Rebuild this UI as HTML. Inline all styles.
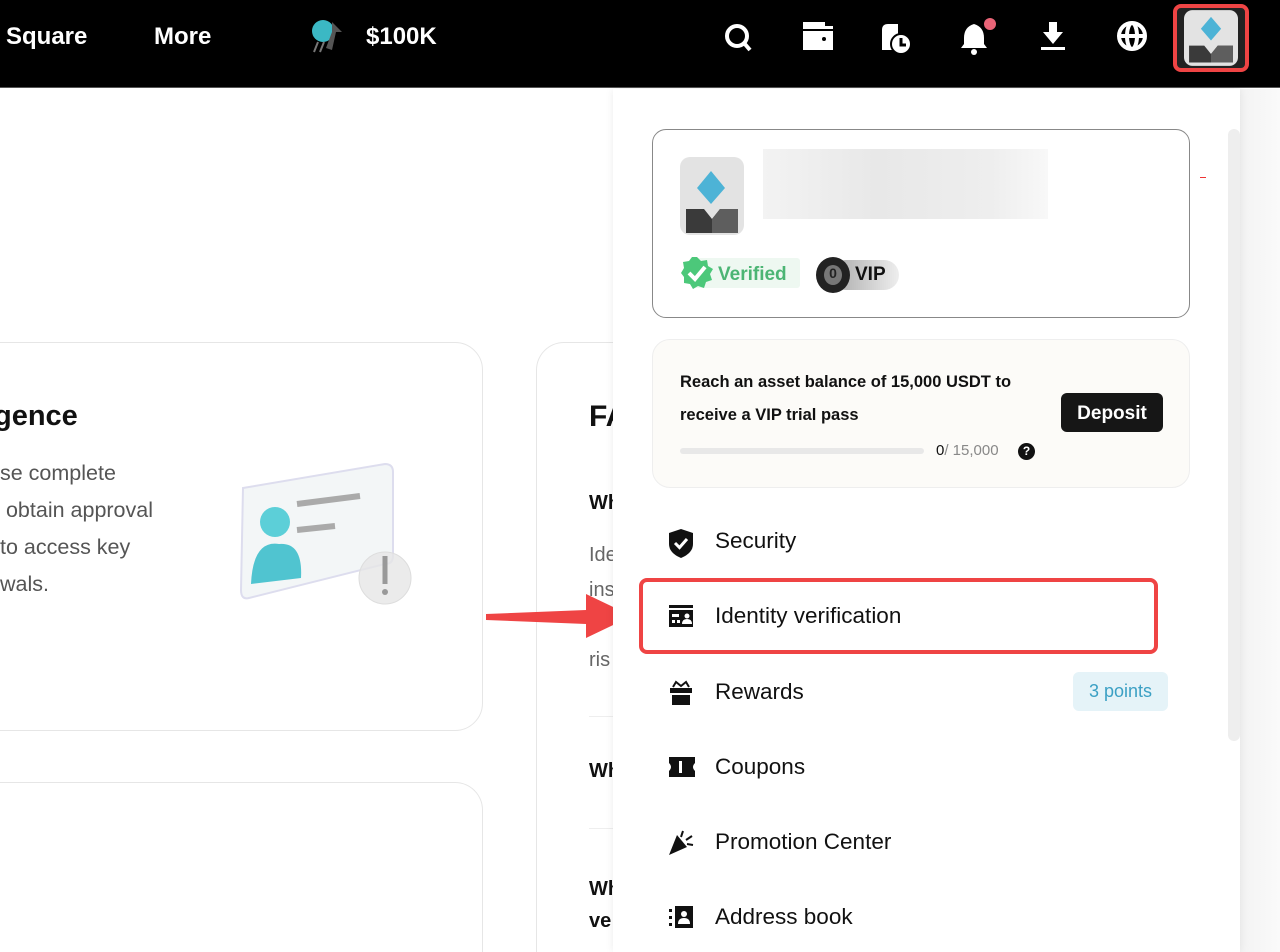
<!DOCTYPE html>
<html style="width:1280px;height:952px;overflow:hidden"><head><meta charset="utf-8"><style>
*{box-sizing:border-box;margin:0;padding:0}
body{width:1280px;height:952px;overflow:hidden;background:#fff;font-family:"Liberation Sans",Arial,sans-serif;position:relative;color:#111}
#wrap{position:absolute;left:0;top:0;width:1280px;height:952px;overflow:hidden}
.hdr{position:absolute;left:0;top:0;width:1280px;height:88px;background:#000;border-bottom:1px solid #555}
.nav{position:absolute;top:23px;color:#fff;font-weight:bold;font-size:24px}
.ic{position:absolute;top:18px}
.card{position:absolute;border:1px solid #e6e6e6;border-radius:28px;background:#fff}
.open{border-bottom:none;border-bottom-left-radius:0;border-bottom-right-radius:0}
.dd{position:absolute;left:613px;top:89px;width:627px;height:863px;background:#fff;box-shadow:0 0 8px rgba(0,0,0,.08);overflow:hidden}
.item{position:absolute;left:54px;font-size:22.5px;color:#111}
.item svg{position:absolute;left:0;top:0}
.item span{position:absolute;left:48px;top:0;white-space:nowrap}
</style></head><body><div id="wrap">
<div class="hdr"></div>
<div class="nav" style="left:6px">Square</div>
<div class="nav" style="left:154px">More</div>
<svg style="position:absolute;left:310px;top:18px" width="40" height="36"><circle cx="13" cy="13" r="11" fill="#3bb8c4"/><path d="M22 4 L32 14 L26 14 L22 32 L16 30 L22 14 Z" fill="#555"/><path d="M8 24 L4 34 M14 24 L10 34" stroke="#777" stroke-width="2"/></svg>
<div class="nav" style="left:366px">$100K</div>
<svg class="ic" style="left:722px" width="32" height="40" viewBox="0 0 32 40"><circle cx="15" cy="18" r="10" fill="none" stroke="#fff" stroke-width="4"/><path d="M22 25 L28 32" stroke="#fff" stroke-width="4"/></svg>
<svg class="ic" style="left:801px" width="34" height="40" viewBox="0 0 34 40"><rect x="2" y="8" width="30" height="24" fill="#fff"/><rect x="2" y="4" width="22" height="4" fill="#fff"/><rect x="2" y="11" width="30" height="2" fill="#000"/><circle cx="23" cy="21" r="2" fill="#000"/></svg>
<svg class="ic" style="left:878px" width="36" height="40" viewBox="0 0 36 40"><path d="M4 12 Q4 6 10 6 L20 6 L20 32 L4 32 Z" fill="#fff"/><circle cx="23" cy="26" r="10" fill="#fff" stroke="#000" stroke-width="2"/><path d="M23 20 V27 H28" stroke="#000" stroke-width="3" fill="none"/></svg>
<svg class="ic" style="left:958px" width="40" height="40" viewBox="0 0 40 40"><path d="M16 4 L16 6 Q6 9 6 20 L6 26 L3 30 L29 30 L26 26 L26 20 Q26 9 16 6Z" fill="#fff"/><circle cx="16" cy="34" r="3" fill="#fff"/><circle cx="32" cy="6" r="6" fill="#e96477"/></svg>
<svg class="ic" style="left:1038px" width="30" height="40" viewBox="0 0 30 40"><path d="M11 4 H19 V14 H25 L15 26 L5 14 H11Z" fill="#fff"/><rect x="3" y="29" width="24" height="3" fill="#fff"/></svg>
<svg class="ic" style="left:1114px" width="36" height="40" viewBox="0 0 36 40"><circle cx="18" cy="18" r="13" fill="none" stroke="#fff" stroke-width="4"/><ellipse cx="18" cy="18" rx="5" ry="13" fill="none" stroke="#fff" stroke-width="4"/><path d="M5 18 H31" stroke="#fff" stroke-width="4"/></svg>
<div style="position:absolute;left:1173px;top:4px;width:76px;height:68px;border:4px solid #ef4444;border-radius:8px;background:#222"></div>
<svg style="position:absolute;left:1184px;top:10px" width="54" height="56" viewBox="0 0 64 66"><rect width="64" height="66" rx="10" fill="#e3e3e3"/><path d="M32 8 L44 22 L32 36 L20 22Z" fill="#4db3d6"/><path d="M6 42 H24 L32 52 L40 42 H58 V62 H6Z" fill="#3a3a3a"/><path d="M32 62 L32 52 L40 42 H58 V62Z" fill="#5e5e5e"/></svg>

<div style="position:absolute;left:1240px;top:89px;width:40px;height:863px;background:linear-gradient(90deg,#f3f3f3,#fafafa)"></div>

<div class="card" style="left:-40px;top:342px;width:523px;height:389px"></div>
<div style="position:absolute;left:-6px;top:400px;font-size:29px;font-weight:bold">gence</div>
<div style="position:absolute;left:0;top:455px;font-size:21.5px;color:#555;line-height:37px">se complete<br>&nbsp;obtain approval<br>to access key<br>wals.</div>
<svg style="position:absolute;left:235px;top:460px" width="190" height="150" viewBox="0 0 190 150"><path d="M8 28 L150 4 Q158 4 158 12 L158 96 Q158 104 150 104 L14 138 Q6 140 6 130 Z" fill="#f3f6f7" stroke="#dde" stroke-width="2"/><circle cx="40" cy="62" r="15" fill="#5ccfd8"/><path d="M16 124 Q18 80 44 84 Q68 82 66 118Z" fill="#50c4d0"/><path d="M62 44 L125 36" stroke="#aaa" stroke-width="6"/><path d="M62 70 L100 66" stroke="#aaa" stroke-width="6"/><circle cx="150" cy="118" r="26" fill="rgba(230,230,230,.8)" stroke="#ddd"/><path d="M150 96 V124" stroke="#999" stroke-width="5"/><circle cx="150" cy="132" r="3" fill="#999"/></svg>
<div class="card open" style="left:-40px;top:782px;width:523px;height:170px"></div>
<div class="card open" style="left:536px;top:342px;width:200px;height:610px"></div>
<div style="position:absolute;left:589px;top:400px;font-size:30px;font-weight:bold">FA</div>
<div style="position:absolute;left:589px;top:492px;font-size:20px;font-weight:bold">Wh</div>
<div style="position:absolute;left:589px;top:538px;font-size:20px;color:#666;line-height:35px">Ide<br>ins<br><br>ris</div>
<div style="position:absolute;left:589px;top:716px;width:30px;height:1px;background:#eee"></div>
<div style="position:absolute;left:589px;top:760px;font-size:20px;font-weight:bold">Wh</div>
<div style="position:absolute;left:589px;top:828px;width:30px;height:1px;background:#eee"></div>
<div style="position:absolute;left:589px;top:873px;font-size:20px;font-weight:bold;line-height:32px">Wh<br>ve</div>
<svg style="position:absolute;left:484px;top:590px" width="150" height="50"><path d="M2 24 L102 20 L102 4 L148 26 L102 48 L102 34 L2 30Z" fill="#ef4444"/></svg>

<div class="dd">
 <div style="position:absolute;left:615px;top:40px;width:12px;height:612px;background:#eee;border-radius:6px"></div>
 <div style="position:absolute;left:39px;top:40px;width:538px;height:189px;border:1.5px solid #888;border-radius:14px"></div>
 <svg style="position:absolute;left:67px;top:68px" width="64" height="78" viewBox="0 0 64 78"><rect width="64" height="78" rx="10" fill="#e3e3e3"/><path d="M31 14 L45 31 L31 47 L17 31Z" fill="#4db3d6"/><path d="M6 52 H24 L32 62 L40 52 H58 V76 H6Z" fill="#3a3a3a"/><path d="M32 76 L32 62 L40 52 H58 V76Z" fill="#5e5e5e"/></svg>
 <div style="position:absolute;left:150px;top:60px;width:285px;height:70px;background:linear-gradient(90deg,#f3f3f3,#e8e8e8 40%,#eee 80%,#f8f8f8)"></div>
 <div style="position:absolute;left:587px;top:88px;width:6px;height:1px;background:#e33"></div>
 <div style="position:absolute;left:80px;top:169px;width:107px;height:30px;background:#eef8f1;border-radius:3px"></div>
 <svg style="position:absolute;left:67px;top:167px" width="34" height="34" viewBox="0 0 34 34"><path d="M17 1 L21 5 L27 4 L28 10 L33 13 L30 18 L32 24 L26 26 L24 32 L18 30 L13 33 L10 28 L4 27 L4 21 L1 17 L4 12 L3 6 L9 5 L12 1Z" fill="#4cc87a"/><path d="M9 17 L15 23 L25 11" stroke="#fff" stroke-width="4" fill="none"/></svg>
 <div style="position:absolute;left:105px;top:175px;font-size:19px;font-weight:bold;color:#4cb574">Verified</div>
 <div style="position:absolute;left:218px;top:171px;width:68px;height:30px;border-radius:15px;background:linear-gradient(90deg,#aaa,#eee)"></div>
 <div style="position:absolute;left:203px;top:168px;width:34px;height:36px;border-radius:50%;background:#222"></div>
 <div style="position:absolute;left:211px;top:176px;width:18px;height:20px;border-radius:50%;background:#777;color:#222;font-size:14px;text-align:center;font-weight:bold">0</div>
 <div style="position:absolute;left:242px;top:175px;font-size:19px;font-weight:bold;color:#111">VIP</div>

 <div style="position:absolute;left:39px;top:250px;width:538px;height:149px;border:1px solid #eee;border-radius:18px;background:#fcfbf8"></div>
 <div style="position:absolute;left:67px;top:277px;font-size:16.5px;font-weight:bold;line-height:33px;color:#111">Reach an asset balance of 15,000 USDT to<br>receive a VIP trial pass</div>
 <div style="position:absolute;left:448px;top:304px;width:102px;height:39px;background:#161616;border-radius:6px;color:#fff;font-weight:bold;font-size:19px;display:flex;align-items:center;justify-content:center;padding-top:2px">Deposit</div>
 <div style="position:absolute;left:67px;top:359px;width:244px;height:6px;background:#e8e8e8;border-radius:3px"></div>
 <div style="position:absolute;left:323px;top:353px;font-size:15px;color:#888"><b style="color:#111;font-weight:normal">0</b>/ 15,000</div>
 <div style="position:absolute;left:405px;top:354px;width:17px;height:17px;border-radius:50%;background:#111;color:#fff;font-size:12px;text-align:center;line-height:17px;font-weight:bold">?</div>

 <div class="item" style="top:439px"><svg width="28" height="30" viewBox="0 0 28 30"><path d="M14 1 L26 5 V16 Q26 25 14 30 Q2 25 2 16 V5Z" fill="#111"/><path d="M8 15 L12.5 19.5 L20 11" stroke="#fff" stroke-width="3" fill="none"/></svg><span>Security</span></div>
 <div style="position:absolute;left:26px;top:489px;width:519px;height:76px;border:4px solid #ef4444;border-radius:8px"></div>
 <div class="item" style="top:514px"><svg width="28" height="26" viewBox="0 0 28 26"><rect x="2" y="2" width="24" height="3" fill="#111"/><rect x="2" y="7" width="24" height="17" fill="#111"/><rect x="5" y="11" width="7" height="3" fill="#fff"/><rect x="5" y="17" width="3" height="3" fill="#fff"/><rect x="10" y="17" width="3" height="3" fill="#fff"/><circle cx="20" cy="13" r="2.5" fill="#fff"/><path d="M15 21 Q15 16 20 16 Q25 16 25 21Z" fill="#fff"/></svg><span>Identity verification</span></div>
 <div class="item" style="top:590px"><svg width="28" height="28" viewBox="0 0 28 28"><path d="M3 9 H25 V14 H3Z M5 16 H23 V26 H5Z" fill="#111"/><path d="M6 8 L9 3 L14 7 L19 3 L22 8" stroke="#111" stroke-width="2" fill="none"/></svg><span>Rewards</span></div>
 <div style="position:absolute;left:460px;top:583px;width:95px;height:39px;background:#e5f3f8;border-radius:6px;color:#3ba0c4;font-size:18px;text-align:center;line-height:38px">3 points</div>
 <div class="item" style="top:665px"><svg width="30" height="26" viewBox="0 0 30 26"><path d="M2 3 H28 V9 Q24 13 28 17 V23 H2 V17 Q6 13 2 9Z" fill="#111"/><rect x="12" y="7" width="3" height="12" fill="#fff"/></svg><span>Coupons</span></div>
 <div class="item" style="top:740px"><svg width="28" height="28" viewBox="0 0 28 28"><path d="M2 26 L10 6 L20 18Z" fill="#111"/><path d="M14 8 L16 2 M19 11 L25 7 M20 15 L26 16" stroke="#111" stroke-width="2"/></svg><span>Promotion Center</span></div>
 <div class="item" style="top:815px"><svg width="28" height="28" viewBox="0 0 28 28"><rect x="8" y="2" width="18" height="22" fill="#111"/><rect x="2" y="5" width="3" height="3" fill="#111"/><rect x="2" y="12" width="3" height="3" fill="#111"/><rect x="2" y="19" width="3" height="3" fill="#111"/><circle cx="17" cy="10" r="3" fill="#fff"/><path d="M11 20 Q11 14 17 14 Q23 14 23 20Z" fill="#fff"/></svg><span>Address book</span></div>
</div>
</div></body></html>
